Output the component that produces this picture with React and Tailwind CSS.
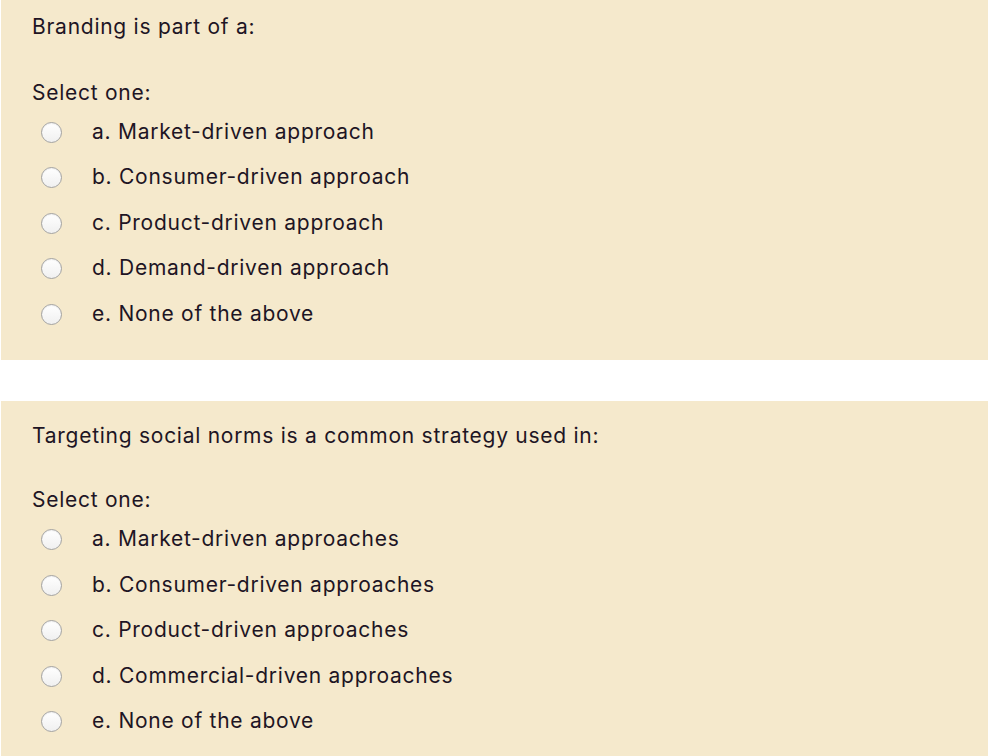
import React from "react";

const font = { fontFamily: "Inter, 'Noto Sans', sans-serif" };

function Radio() {
  return (
    <span className="block w-[21px] h-[21px] rounded-full border border-[#a3a3a3] bg-gradient-to-b from-white to-[#f0f0f0] shadow-[inset_0_1px_1px_rgba(0,0,0,0.06)] shrink-0" />
  );
}

function Question({ q, options, pt, gapQ, gapS, pb }) {
  return (
    <div className={`ml-px bg-[#f5e9cc] text-[#1e1524] text-[21px] leading-[28px] tracking-[0.035em] pl-[31px] ${pt} ${pb}`}>
      <div>{q}</div>
      <div className={gapQ}>Select one:</div>
      <div className={`flex flex-col ${gapS}`}>
        {options.map((o) => (
          <div key={o} className="h-[45.5px] flex items-center">
            <span className="ml-[9px] mt-[1px]"><Radio /></span>
            <span className="ml-[30px]">{o}</span>
          </div>
        ))}
      </div>
    </div>
  );
}

export default function App() {
  return (
    <div className="w-[988px] h-[756px] overflow-hidden bg-white" style={font}>
      <Question
        q="Branding is part of a:"
        options={[
          "a. Market-driven approach",
          "b. Consumer-driven approach",
          "c. Product-driven approach",
          "d. Demand-driven approach",
          "e. None of the above",
        ]}
        pt="pt-[13px]"
        gapQ="mt-[38px]"
        gapS="mt-[2px]"
        pb="pb-[23px]"
      />
      <div className="h-[41px]" />
      <Question
        q="Targeting social norms is a common strategy used in:"
        options={[
          "a. Market-driven approaches",
          "b. Consumer-driven approaches",
          "c. Product-driven approaches",
          "d. Commercial-driven approaches",
          "e. None of the above",
        ]}
        pt="pt-[21px]"
        gapQ="mt-[36px]"
        gapS="mt-[3px]"
        pb="pb-[24px]"
      />
    </div>
  );
}
